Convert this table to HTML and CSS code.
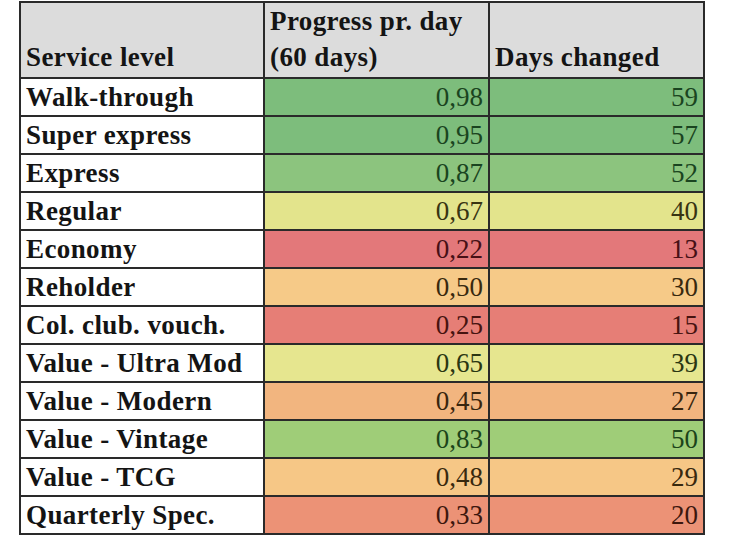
FILE: index.html
```html
<!DOCTYPE html>
<html>
<head>
<meta charset="utf-8">
<link rel="stylesheet" href="styles.css">
</head>
<body>
<div class="wrap">
<table class="grid">
  <colgroup><col class="c1"><col class="c2"><col class="c3"></colgroup>
  <thead>
    <tr><th>Service level</th><th>Progress pr. day<br>(60 days)</th><th>Days changed</th></tr>
  </thead>
  <tbody>
    <tr class="g1"><td>Walk-through</td><td class="n">0,98</td><td class="n">59</td></tr>
    <tr class="g1"><td>Super express</td><td class="n">0,95</td><td class="n">57</td></tr>
    <tr class="g2"><td>Express</td><td class="n">0,87</td><td class="n">52</td></tr>
    <tr class="y1"><td>Regular</td><td class="n">0,67</td><td class="n">40</td></tr>
    <tr class="r1"><td>Economy</td><td class="n">0,22</td><td class="n">13</td></tr>
    <tr class="o1"><td>Reholder</td><td class="n">0,50</td><td class="n">30</td></tr>
    <tr class="r2"><td>Col. club. vouch.</td><td class="n">0,25</td><td class="n">15</td></tr>
    <tr class="y2"><td>Value - Ultra Mod</td><td class="n">0,65</td><td class="n">39</td></tr>
    <tr class="o2"><td>Value - Modern</td><td class="n">0,45</td><td class="n">27</td></tr>
    <tr class="g3"><td>Value - Vintage</td><td class="n">0,83</td><td class="n">50</td></tr>
    <tr class="o3"><td>Value - TCG</td><td class="n">0,48</td><td class="n">29</td></tr>
    <tr class="s1"><td>Quarterly Spec.</td><td class="n">0,33</td><td class="n">20</td></tr>
  </tbody>
</table>
</div>
</body>
</html>
```

FILE: styles.css
```css
html, body {
  margin: 0;
  padding: 0;
  background: #ffffff;
}
.wrap {
  padding: 1px 0 0 19px;
}
.grid {
  border-collapse: collapse;
  table-layout: fixed;
  width: 684px;
  font-family: "Liberation Serif", "Times New Roman", serif;
  color: #141414;
  border: 2px solid #262626;
}
.c1 { width: 244px; }
.c2 { width: 225px; }
.c3 { width: 215px; }
.grid th, .grid td {
  border: 2px solid #2a2a2a;
  padding: 0 5px;
  white-space: nowrap;
  overflow: hidden;
}
.grid th {
  height: 72px;
  background: #dcdcdc;
  font-size: 27px;
  font-weight: bold;
  text-align: left;
  vertical-align: bottom;
  line-height: 36px;
  letter-spacing: 0.4px;
  padding-bottom: 2px;
}
.grid td {
  height: 36px;
  font-size: 27px;
  line-height: 36px;
  font-weight: bold;
  background: #ffffff;
  letter-spacing: 0.4px;
}
.grid td.n {
  font-weight: normal;
  text-align: right;
  padding-right: 5px;
  font-size: 27px;
  letter-spacing: 0;
}
.g1 td.n { background: #7dbd7c; color: #1a4420; }
.g2 td.n { background: #8cc47e; color: #1a4420; }
.g3 td.n { background: #9fcd78; color: #1c441a; }
.y1 td.n { background: #e3e48c; color: #383412; }
.y2 td.n { background: #e6e68f; color: #2a3612; }
.r1 td.n { background: #e3787a; color: #461016; }
.r2 td.n { background: #e67e76; color: #461310; }
.o1 td.n { background: #f6ca88; color: #38290e; }
.o2 td.n { background: #f2b57f; color: #38250e; }
.o3 td.n { background: #f6c786; color: #38290e; }
.s1 td.n { background: #ec9276; color: #3c170e; }
```
